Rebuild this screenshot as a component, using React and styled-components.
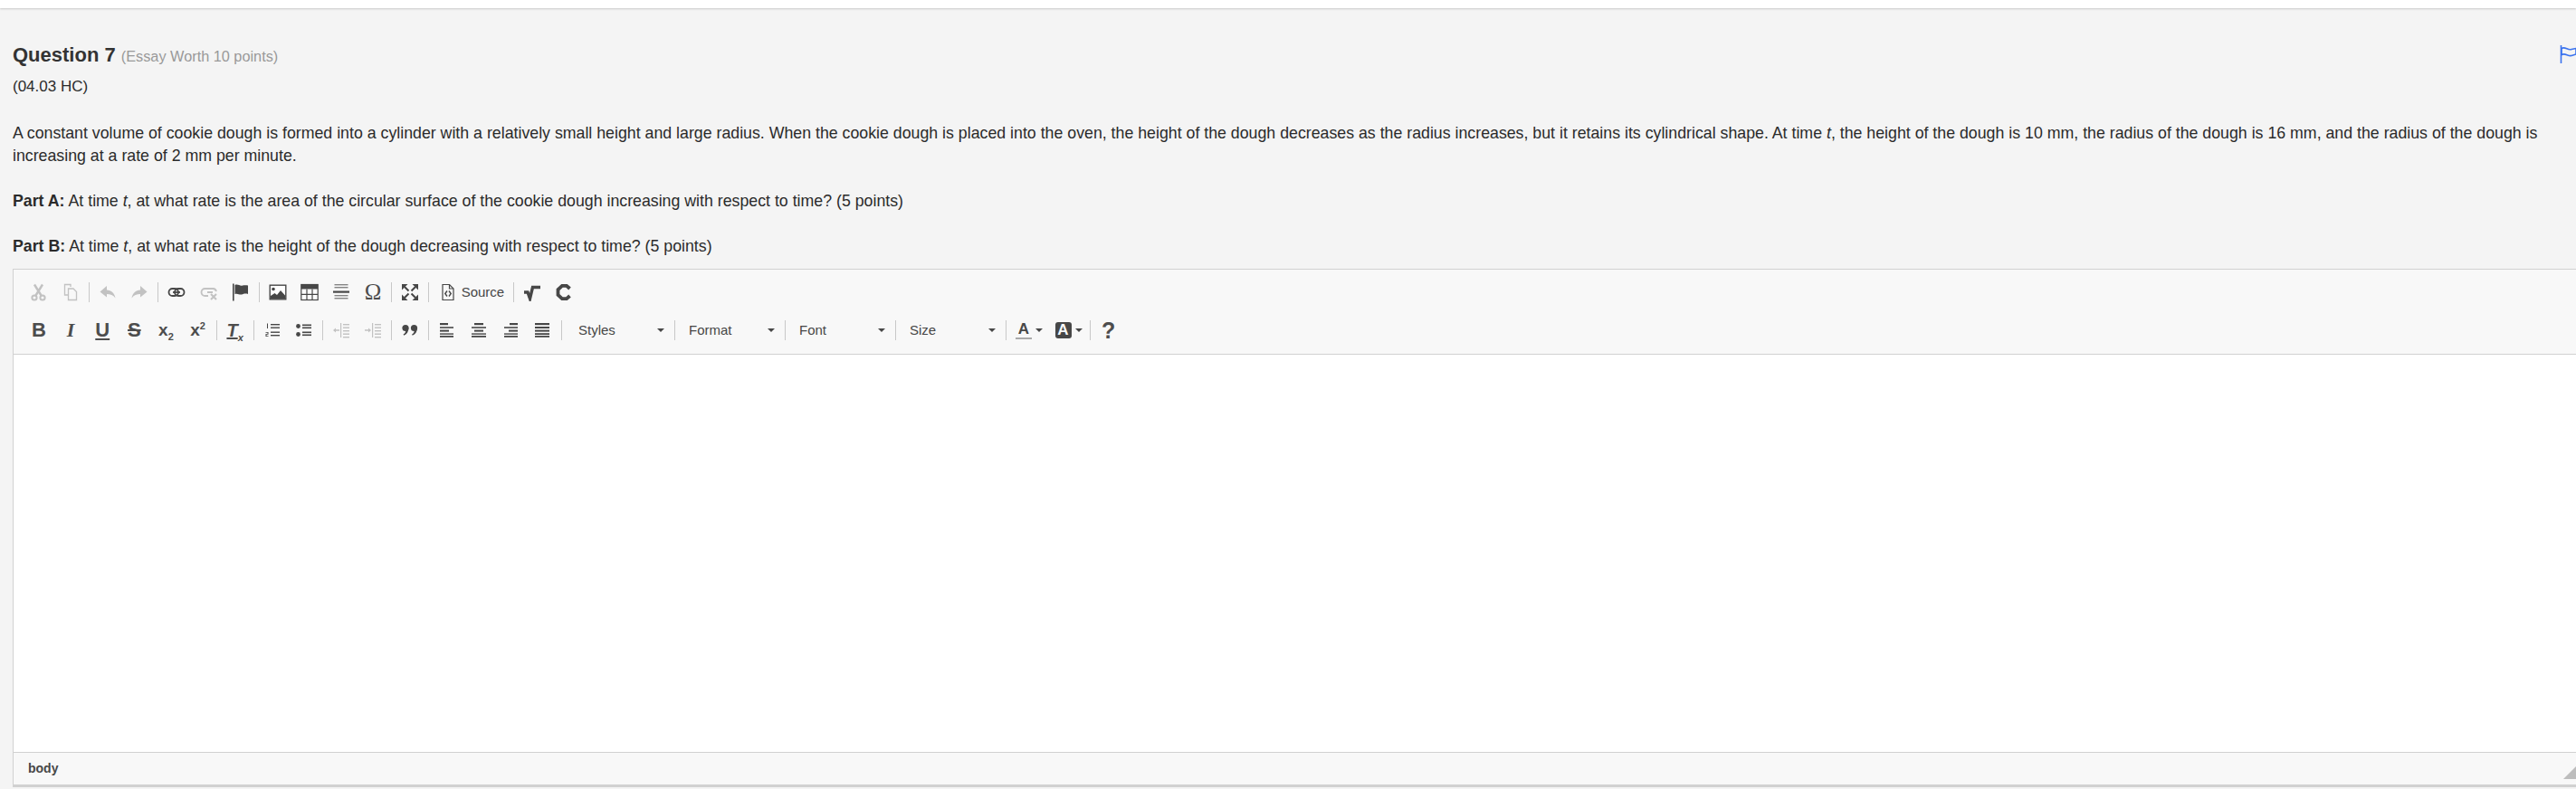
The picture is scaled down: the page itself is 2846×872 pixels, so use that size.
import styled, { createGlobalStyle } from 'styled-components'

const GlobalStyle = createGlobalStyle`
  html, body {
    margin: 0;
    padding: 0;
    background: #f4f4f4;
    overflow: hidden;
  }
  body {
    font-family: "Liberation Sans", Arial, sans-serif;
    color: #2b2b2b;
  }
`

// toolbar icons, all drawn on a 20x20 grid
const icons = {
  cut: (
    <g fill="none" stroke="currentColor" strokeWidth="2">
      <circle cx="5" cy="16" r="2.6" />
      <circle cx="14" cy="16" r="2.6" />
      <path d="M6.5 13.5 14 1.5M12.5 13.5 5 1.5" strokeWidth="2.4" />
    </g>
  ),
  copy: (
    <g fill="none" stroke="currentColor" strokeWidth="1.3">
      <path d="M10 4V1.5H3.5V13H7" />
      <path d="M7.5 6H13L16.5 9.5V18.5H7.5Z" />
    </g>
  ),
  undo: <path fill="currentColor" d="M9 3 1.5 9.5 9 15.5V12C13 12 16 13 18.5 16.5 17.5 11 14 7.5 9 7.5Z" />,
  redo: <path fill="currentColor" d="M11 3 18.5 9.5 11 15.5V12C7 12 4 13 1.5 16.5 2.5 11 6 7.5 11 7.5Z" />,
  link: (
    <g fill="none" stroke="currentColor" strokeWidth="1.8">
      <rect x="1.5" y="6" width="10.5" height="8" rx="4" />
      <rect x="8" y="6" width="10.5" height="8" rx="4" />
      <path d="M6 10H14" />
    </g>
  ),
  unlink: (
    <g fill="none" stroke="currentColor" strokeWidth="1.8">
      <path d="M11 6H5.5a4 4 0 0 0 0 8H9" />
      <path d="M8 10H14M10 6H14.5a4 4 0 0 1 3.5 3" />
      <path d="M12 12 18 18M18 12 12 18" strokeWidth="2" />
    </g>
  ),
  flag: (
    <g fill="currentColor">
      <rect x="1" y="0.5" width="1.6" height="19" />
      <path d="M3.5 2C7 .5 9 3.5 12 2.5 14 2 16 2 18 2.5V12C15 11 13 12 11 12.5 8 13 7 11 3.5 12Z" />
    </g>
  ),
  image: (
    <g>
      <rect x="1.2" y="2.2" width="17.6" height="15.6" fill="#fff" stroke="currentColor" strokeWidth="1.4" />
      <circle cx="5" cy="6.5" r="1.8" fill="currentColor" />
      <path fill="currentColor" d="M2 17V14L6.5 11 9 13 13 8 18 13.5V17Z" />
    </g>
  ),
  table: (
    <g>
      <rect x="0.8" y="1.5" width="18.4" height="17" fill="#fff" stroke="currentColor" strokeWidth="1.2" />
      <rect x="0.8" y="1.5" width="18.4" height="5" fill="currentColor" />
      <path stroke="currentColor" strokeWidth="1.2" d="M7 6.5V18M13 6.5V18M1 12.3H19" />
    </g>
  ),
  hr: (
    <g fill="currentColor">
      <rect x="2.5" y="1" width="15" height="1.4" opacity=".65" />
      <rect x="2.5" y="4" width="15" height="1.4" opacity=".65" />
      <rect x="1" y="8.5" width="18" height="2.2" />
      <rect x="2.5" y="13" width="15" height="1.4" opacity=".65" />
      <rect x="2.5" y="16" width="15" height="1.4" opacity=".65" />
    </g>
  ),
  maximize: (
    <g>
      <g fill="currentColor">
        <path d="M1 1H7.5L1 7.5Z" />
        <path d="M19 1H12.5L19 7.5Z" />
        <path d="M1 19H7.5L1 12.5Z" />
        <path d="M19 19H12.5L19 12.5Z" />
      </g>
      <path fill="none" stroke="currentColor" strokeWidth="2" d="M4 4 8.5 8.5M16 4 11.5 8.5M4 16 8.5 11.5M16 16 11.5 11.5" />
    </g>
  ),
  source: (
    <g fill="none" stroke="currentColor">
      <path strokeWidth="1.2" d="M4 1.5H11.5L16 6V18.5H4Z" />
      <path strokeWidth="1.2" d="M11.5 1.5V6H16" />
      <path strokeWidth="1.4" d="M9 8.5 6.8 11.5 9 14.5M11 8.5 13.2 11.5 11 14.5" />
    </g>
  ),
  sqrt: <path fill="none" stroke="currentColor" strokeWidth="3.4" d="M1 10 5 10 7.5 17 10.5 4.5H19" />,
  cycle: <path fill="none" stroke="currentColor" strokeWidth="3.8" d="M16.5 6 13 2.8H8L3.5 7V13L8 17.2H13L16.5 14" />,
  ol: (
    <g fill="currentColor">
      <rect x="8" y="3" width="10" height="1.4" />
      <rect x="8" y="6.5" width="10" height="1.4" />
      <rect x="8" y="11.5" width="10" height="1.4" />
      <rect x="8" y="15" width="10" height="1.4" />
      <path d="M4 2.5H5V8H4ZM2.5 12H5.5V14.8H3.5V16.2H5.5V17H2.5V14H4.5V12.8H2.5Z" />
    </g>
  ),
  ul: (
    <g fill="currentColor">
      <circle cx="3.5" cy="5.5" r="2.4" />
      <circle cx="3.5" cy="14.5" r="2.4" />
      <rect x="8" y="3.5" width="10" height="1.6" />
      <rect x="8" y="6.5" width="10" height="1.6" />
      <rect x="8" y="11.5" width="10" height="1.6" />
      <rect x="8" y="14.5" width="10" height="1.6" />
    </g>
  ),
  outdent: (
    <g fill="currentColor">
      <path d="M1 9.3H5V7.5L8 10 5 12.5V10.7H1Z" transform="rotate(180 4.5 10)" />
      <rect x="9" y="2" width="1.2" height="16" />
      <rect x="12" y="3" width="7" height="1.4" />
      <rect x="12" y="6.5" width="7" height="1.4" />
      <rect x="12" y="10" width="7" height="1.4" />
      <rect x="12" y="13.5" width="7" height="1.4" />
      <rect x="12" y="17" width="7" height="1.4" />
    </g>
  ),
  indent: (
    <g fill="currentColor">
      <path d="M1 9.3H5V7.5L8 10 5 12.5V10.7H1Z" />
      <rect x="9" y="2" width="1.2" height="16" />
      <rect x="12" y="3" width="7" height="1.4" />
      <rect x="12" y="6.5" width="7" height="1.4" />
      <rect x="12" y="10" width="7" height="1.4" />
      <rect x="12" y="13.5" width="7" height="1.4" />
      <rect x="12" y="17" width="7" height="1.4" />
    </g>
  ),
  quote: (
    <g fill="currentColor">
      <circle cx="5" cy="7.5" r="3.6" />
      <path d="M8.4 7.5C8.4 11.5 6.5 14.5 3.2 15.8L2.6 14.6C4.4 13.5 5.2 12 5.2 10Z" />
      <circle cx="14.5" cy="7.5" r="3.6" />
      <path d="M17.9 7.5C17.9 11.5 16 14.5 12.7 15.8L12.1 14.6C13.9 13.5 14.7 12 14.7 10Z" />
    </g>
  ),
  alignLeft: (
    <g fill="currentColor">
      <rect x="2" y="2" width="9" height="2.2" />
      <rect x="2" y="6" width="15" height="2" opacity=".8" />
      <rect x="2" y="9.6" width="10" height="2" />
      <rect x="2" y="13.2" width="15" height="1.8" opacity=".8" />
      <rect x="2" y="16" width="15" height="1.8" />
    </g>
  ),
  alignCenter: (
    <g fill="currentColor">
      <rect x="5" y="2" width="10" height="2.2" />
      <rect x="2" y="6" width="16" height="2" opacity=".8" />
      <rect x="5" y="9.6" width="10" height="2" />
      <rect x="2" y="13.2" width="16" height="1.8" opacity=".8" />
      <rect x="2" y="16" width="16" height="1.8" />
    </g>
  ),
  alignRight: (
    <g fill="currentColor">
      <rect x="9" y="2" width="9" height="2.2" />
      <rect x="3" y="6" width="15" height="2" opacity=".8" />
      <rect x="8" y="9.6" width="10" height="2" />
      <rect x="3" y="13.2" width="15" height="1.8" opacity=".8" />
      <rect x="3" y="16" width="15" height="1.8" />
    </g>
  ),
  justify: (
    <g fill="currentColor">
      <rect x="2" y="2" width="16" height="2.2" />
      <rect x="2" y="6" width="16" height="2" />
      <rect x="2" y="9.6" width="16" height="2" />
      <rect x="2" y="13.2" width="16" height="1.8" />
      <rect x="2" y="16" width="16" height="1.8" />
    </g>
  ),
}

const Page = styled.div`
  width: 2846px;
  height: 872px;
  overflow: hidden;
`

const TopBar = styled.div`
  height: 9px;
  background: #fff;
  box-shadow: 0 1px 2px rgba(0, 0, 0, 0.18);
`

const Question = styled.section`
  padding: 37px 0 0 14px;
`

const QuestionHead = styled.div`
  display: flex;
  justify-content: space-between;
  align-items: flex-start;
  height: 30px;
`

const Title = styled.h2`
  margin: 0;
  font-size: 22px;
  line-height: 30px;
  font-weight: 700;
  color: #333;
`

const Worth = styled.small`
  font-size: 16.3px;
  font-weight: 400;
  color: #999;
`

const FlagIcon = styled.svg`
  flex: none;
  margin-top: 4px;
  width: 18px;
  height: 20px;
  color: #3b73ee;
`

const Para = styled.p`
  margin: ${(p) => p.$top}px 0 0;
  width: 2822px;
  font-size: ${(p) => p.$size || 17.75}px;
  line-height: 25.6px;
  color: #2b2b2b;
`

const Editor = styled.div`
  margin: 11px 0 0;
  width: 2860px;
  height: 573px;
  box-sizing: border-box;
  display: flex;
  flex-direction: column;
  background: #fff;
  border: 1px solid #d1d1d1;
  border-bottom-width: 3px;
`

const Toolbar = styled.div`
  flex: none;
  padding: 4px 0 5px 10.5px;
  background: #f8f8f8;
  border-bottom: 1px solid #d1d1d1;
`

const ToolRow = styled.div`
  display: flex;
  align-items: center;
  height: 42px;
`

const ToolButton = styled.span`
  flex: none;
  width: ${(p) => p.$w || 35.1}px;
  height: 30px;
  display: flex;
  align-items: center;
  justify-content: ${(p) => (p.$w ? 'flex-start' : 'center')};
  padding-left: ${(p) => (p.$w ? 8 : 0)}px;
  box-sizing: border-box;
  color: #474747;
  opacity: ${(p) => (p.$off ? 0.3 : 1)};
  svg {
    flex: none;
    width: 20px;
    height: 20px;
  }
`

const Glyph = styled.span`
  font-family: ${(p) => p.$font || '"Liberation Sans"'}, sans-serif;
  font-size: ${(p) => p.$size || 22}px;
  font-weight: ${(p) => p.$weight || 700};
  font-style: ${(p) => (p.$italic ? 'italic' : 'normal')};
  text-decoration: ${(p) => p.$line || 'none'};
  line-height: 20px;
  color: #4d4d4d;
  sub, sup {
    font-size: 11px;
    line-height: 0;
  }
`

const Sep = styled.i`
  flex: none;
  width: 1px;
  height: 22px;
  margin: 0 2.5px;
  background: #c8c8c8;
`

const ButtonLabel = styled.span`
  margin-left: 5px;
  font-size: 15px;
  color: #474747;
`

const Combo = styled.span`
  flex: none;
  width: ${(p) => (p.$first ? 119 : 116)}px;
  box-sizing: border-box;
  padding: 0 8px 0 ${(p) => (p.$first ? 16 : 13)}px;
  display: flex;
  align-items: center;
  justify-content: space-between;
  font-size: 15px;
  color: #474747;
`

const Caret = styled.i`
  width: 0;
  height: 0;
  border: 4px solid transparent;
  border-top: 4px solid #474747;
  border-bottom: 0;
`

const ColorButton = styled.span`
  flex: none;
  width: 43.5px;
  height: 30px;
  box-sizing: border-box;
  padding-left: 8px;
  display: flex;
  align-items: center;
  gap: 4px;
`

const ColorA = styled.span`
  width: 18px;
  height: 18px;
  display: flex;
  align-items: center;
  justify-content: center;
  font-size: 17px;
  font-weight: 700;
  line-height: 18px;
  color: ${(p) => (p.$filled ? '#f8f8f8' : '#474747')};
  background: ${(p) => (p.$filled ? '#474747' : 'transparent')};
  border-radius: ${(p) => (p.$filled ? 3 : 0)}px;
  border-bottom: ${(p) => (p.$filled ? 0 : '2px solid #aaa')};
`

const Content = styled.div`
  flex: 1;
  background: #fff;
`

const Footer = styled.div`
  flex: none;
  height: 35px;
  display: flex;
  align-items: center;
  padding-left: 16px;
  background: #f8f8f8;
  border-top: 1px solid #d1d1d1;
  font-size: 14px;
  font-weight: 700;
  color: #474747;
`

const Resizer = styled.svg`
  position: absolute;
  left: 2832px;
  top: 847px;
  width: 14px;
  height: 14px;
`

function Icon({ name }) {
  return <svg viewBox="0 0 20 20">{icons[name]}</svg>
}

function Tool({ name, off }) {
  return (
    <ToolButton $off={off}>
      <Icon name={name} />
    </ToolButton>
  )
}

function App() {
  return (
    <Page>
      <GlobalStyle />
      <TopBar />
      <Question>
        <QuestionHead>
          <Title>
            Question 7 <Worth>(Essay Worth 10 points)</Worth>
          </Title>
          <FlagIcon viewBox="0 0 18 20" fill="none" stroke="currentColor" strokeWidth="1.6">
            <path d="M1.5 0V20" />
            <path d="M2 3.5C6 1 9 6 13 4.5L18 3.5V10L13 11.5C9 12.5 6 8 2 10.5Z" />
          </FlagIcon>
        </QuestionHead>
        <Para $top={7} $size={17}>(04.03 HC)</Para>
        <Para $top={26}>
          A constant volume of cookie dough is formed into a cylinder with a relatively small height and large radius. When the cookie dough is placed into the oven, the height of the dough decreases as the radius increases, but it retains its cylindrical shape. At time <em>t</em>, the height of the dough is 10 mm, the radius of the dough is 16 mm, and the radius of the dough is increasing at a rate of 2 mm per minute.
        </Para>
        <Para $top={24}>
          <b>Part A:</b> At time <em>t</em>, at what rate is the area of the circular surface of the cookie dough increasing with respect to time? (5 points)
        </Para>
        <Para $top={25}>
          <b>Part B:</b> At time <em>t</em>, at what rate is the height of the dough decreasing with respect to time? (5 points)
        </Para>
        <Editor>
          <Toolbar>
            <ToolRow>
              <Tool name="cut" off />
              <Tool name="copy" off />
              <Sep />
              <Tool name="undo" off />
              <Tool name="redo" off />
              <Sep />
              <Tool name="link" />
              <Tool name="unlink" off />
              <Tool name="flag" />
              <Sep />
              <Tool name="image" />
              <Tool name="table" />
              <Tool name="hr" />
              <ToolButton><Glyph $font='"Liberation Serif"' $size={25} $weight={400}>Ω</Glyph></ToolButton>
              <Sep />
              <Tool name="maximize" />
              <Sep />
              <ToolButton $w={88}>
                <Icon name="source" />
                <ButtonLabel>Source</ButtonLabel>
              </ToolButton>
              <Sep />
              <Tool name="sqrt" />
              <Tool name="cycle" />
            </ToolRow>
            <ToolRow>
              <ToolButton><Glyph>B</Glyph></ToolButton>
              <ToolButton><Glyph $italic $font='"Liberation Serif"'>I</Glyph></ToolButton>
              <ToolButton><Glyph $line="underline">U</Glyph></ToolButton>
              <ToolButton><Glyph $line="line-through">S</Glyph></ToolButton>
              <ToolButton><Glyph $size={19}>x<sub>2</sub></Glyph></ToolButton>
              <ToolButton><Glyph $size={19}>x<sup>2</sup></Glyph></ToolButton>
              <Sep />
              <ToolButton><Glyph $italic $line="underline" $size={20}>T<sub>x</sub></Glyph></ToolButton>
              <Sep />
              <Tool name="ol" />
              <Tool name="ul" />
              <Sep />
              <Tool name="outdent" off />
              <Tool name="indent" off />
              <Sep />
              <Tool name="quote" />
              <Sep />
              <Tool name="alignLeft" />
              <Tool name="alignCenter" />
              <Tool name="alignRight" />
              <Tool name="justify" />
              <Sep />
              <Combo $first>Styles<Caret /></Combo>
              <Sep />
              <Combo>Format<Caret /></Combo>
              <Sep />
              <Combo>Font<Caret /></Combo>
              <Sep />
              <Combo>Size<Caret /></Combo>
              <Sep />
              <ColorButton><ColorA>A</ColorA><Caret /></ColorButton>
              <ColorButton><ColorA $filled>A</ColorA><Caret /></ColorButton>
              <Sep />
              <ToolButton><Glyph $size={25}>?</Glyph></ToolButton>
            </ToolRow>
          </Toolbar>
          <Content />
          <Footer>body</Footer>
        </Editor>
      </Question>
      <Resizer viewBox="0 0 14 14"><path d="M14 0V14H0Z" fill="#bdbdbd" /></Resizer>
    </Page>
  )
}

export default App
